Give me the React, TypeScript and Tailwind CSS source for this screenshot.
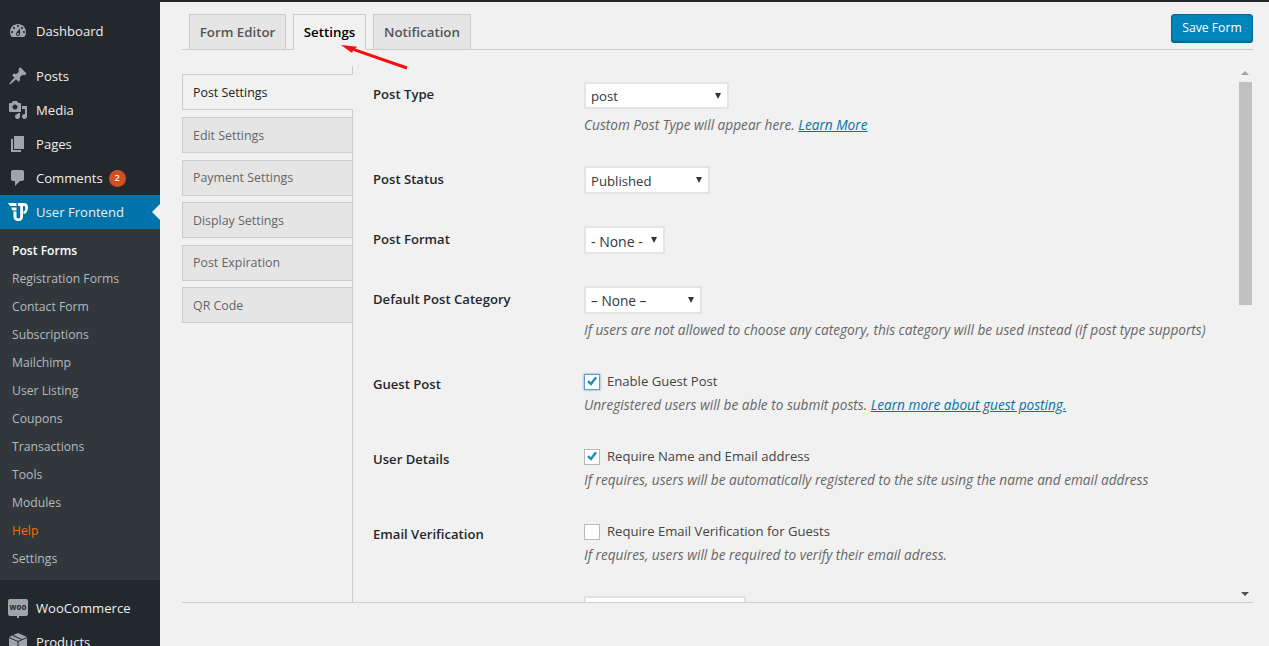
import type { ReactNode } from "react";

const icons = {
  dashboard:
    "M3.76 16h12.48c1.1-1.37 1.76-3.11 1.76-5 0-4.42-3.58-8-8-8s-8 3.58-8 8c0 1.89.66 3.63 1.76 5zM10 4c.55 0 1 .45 1 1s-.45 1-1 1-1-.45-1-1 .45-1 1-1zM6 6c.55 0 1 .45 1 1s-.45 1-1 1-1-.45-1-1 .45-1 1-1zm8 0c.55 0 1 .45 1 1s-.45 1-1 1-1-.45-1-1 .45-1 1-1zm-5.37 5.55L12 7v6c0 1.1-.9 2-2 2s-2-.9-2-2c0-.57.24-1.08.63-1.45zM4 10c.55 0 1 .45 1 1s-.45 1-1 1-1-.45-1-1 .45-1 1-1zm12 0c.55 0 1 .45 1 1s-.45 1-1 1-1-.45-1-1 .45-1 1-1zm-5 3c0-.55-.45-1-1-1s-1 .45-1 1 .45 1 1 1 1-.45 1-1z",
  post: "M10.44 3.02l1.82-1.82 6.36 6.35-1.83 1.82c-1.05-.68-2.48-.57-3.41.36l-.75.75c-.92.93-1.04 2.35-.35 3.41l-1.83 1.82-2.41-2.41-2.8 2.79c-.42.42-3.38 2.71-3.8 2.29s1.86-3.39 2.28-3.81l2.79-2.79L4.1 9.36l1.83-1.82c1.05.69 2.48.57 3.4-.36l.75-.75c.93-.92 1.05-2.35.36-3.41z",
  media:
    "M13 11V4c0-.55-.45-1-1-1h-1.67L9 1H5L3.67 3H2c-.55 0-1 .45-1 1v7c0 .55.45 1 1 1h10c.55 0 1-.45 1-1zM7 4.5c1.38 0 2.5 1.12 2.5 2.5S8.38 9.5 7 9.5 4.5 8.38 4.5 7 5.62 4.5 7 4.5zM14 6h5v10.5c0 1.38-1.12 2.5-2.5 2.5S14 17.88 14 16.5s1.12-2.5 2.5-2.5c.17 0 .34.02.5.05V9h-3V6zm-4 8.05V13h2v3.5c0 1.38-1.12 2.5-2.5 2.5S7 17.88 7 16.5 8.12 14 9.5 14c.17 0 .34.02.5.05z",
  page: "M6 15V2h10v13H6zm-1 1h8v2H3V5h2v11z",
  comment:
    "M5 2h9c1.1 0 2 .9 2 2v7c0 1.1-.9 2-2 2h-2l-5 5v-5H5c-1.1 0-2-.9-2-2V4c0-1.1.9-2 2-2z",
  frontend:
    "M0 1h8.500v3H2zM3 5.500h5.500v3H4.500zM5.500 9.500h3v5c0 1.300.7 2 2 2s1.700-.7 1.700-2V4h2.800v10.500c0 3-1.800 4.500-4.500 4.500s-5-1.500-5-4.500zM10 1h6c2.600 0 4 1.900 4 4.200S18.600 12 16 12h-.5V9h.5c.8 0 1.200-.8 1.200-1.800V5.500c0-1-.4-1.500-1.200-1.500h-6z",
};

function MenuIcon({ path, dim = true }: { path: string; dim?: boolean }) {
  return (
    <svg viewBox="0 0 20 20" className={`h-5 w-5 ${dim ? "text-[#a0a5aa]" : "text-white"}`} fill="currentColor">
      <path d={path} />
    </svg>
  );
}

function WooIcon() {
  return (
    <div className="relative -mt-[2px] flex h-[17px] w-5 items-center justify-center rounded-[2px] bg-[#a0a5aa]">
      <span className="text-[8px] leading-none font-bold text-[#23282d]">woo</span>
      <span className="absolute -bottom-[2px] left-[9px] h-[3px] w-[2px] bg-[#a0a5aa]" />
    </div>
  );
}

function ProductsIcon() {
  return (
    <svg viewBox="0 0 20 20" className="h-5 w-5">
      <path d="M10 1l9 4v10l-9 4-9-4V5z" fill="#a0a5aa" />
      <path d="M1 5.500l9 4 9-4M10 9.500V19M5 3.500l9 4" stroke="#23282d" strokeWidth="1" fill="none" />
    </svg>
  );
}

function MenuItem({ icon, label, badge }: { icon: ReactNode; label: string; badge?: string }) {
  return (
    <div className="flex h-[34px] items-center text-[13.100px] text-[#eeeeee]">
      <div className="flex w-9 justify-center">{icon}</div>
      <span className="mt-[2px]">{label}</span>
      {badge && (
        <span className="ml-[6px] flex h-[17px] w-[17px] items-center justify-center rounded-full bg-[#d54e21] text-[9px] font-semibold text-white">
          {badge}
        </span>
      )}
    </div>
  );
}

const subItems = [
  "Post Forms",
  "Registration Forms",
  "Contact Form",
  "Subscriptions",
  "Mailchimp",
  "User Listing",
  "Coupons",
  "Transactions",
  "Tools",
  "Modules",
  "Help",
  "Settings",
];

function Sidebar() {
  return (
    <div className="h-full w-[160px] shrink-0 bg-[#23282d] pt-3">
      <MenuItem icon={<MenuIcon path={icons.dashboard} />} label="Dashboard" />
      <div className="mt-[11px]">
        <MenuItem icon={<MenuIcon path={icons.post} />} label="Posts" />
        <MenuItem icon={<MenuIcon path={icons.media} />} label="Media" />
        <MenuItem icon={<MenuIcon path={icons.page} />} label="Pages" />
        <MenuItem icon={<MenuIcon path={icons.comment} />} label="Comments" badge="2" />
      </div>
      <div className="relative bg-[#0073aa]">
        <MenuItem icon={<MenuIcon path={icons.frontend} dim={false} />} label="User Frontend" />
        <span className="absolute top-[9px] right-0 h-0 w-0 border-y-[8px] border-r-[8px] border-y-transparent border-r-[#f1f1f1]" />
      </div>
      <div className="bg-[#32373c] pt-[7px] pb-[8px]">
        {subItems.map((item) => (
          <div
            key={item}
            className={`flex h-7 items-center pt-[2px] pl-3 ${
              item === "Post Forms"
                ? "text-[12.100px] font-semibold text-white"
                : item === "Help"
                  ? "text-[12.200px] text-[#f56e00]"
                  : "text-[12.200px] text-[#b4b9be]"
            }`}
          >
            {item}
          </div>
        ))}
      </div>
      <div className="mt-[11px]">
        <MenuItem icon={<WooIcon />} label="WooCommerce" />
        <MenuItem icon={<ProductsIcon />} label="Products" />
      </div>
    </div>
  );
}

function TopTab({ label, active, className }: { label: string; active?: boolean; className: string }) {
  return (
    <div
      className={`-mb-px flex h-[36px] items-center justify-center border border-[#cccccc] pt-[2px] text-[13.300px] font-semibold ${className} ${
        active ? "border-b-[#f1f1f1] bg-[#f1f1f1] text-black" : "bg-[#e5e5e5] text-[#555555]"
      }`}
    >
      {label}
    </div>
  );
}

const sideTabs = ["Edit Settings", "Payment Settings", "Display Settings", "Post Expiration", "QR Code"];

function SideTabs() {
  return (
    <div className="relative z-10 w-[170px] shrink-0 pt-2">
      <div className="flex h-9 w-[171px] items-center border-y border-l border-[#cccccc] bg-[#f1f1f1] pt-[3px] pl-[10px] text-[12.400px] text-[#222222]">
        Post Settings
      </div>
      <div className="mt-[7px] flex flex-col gap-[6.500px]">
        {sideTabs.map((tab) => (
          <div
            key={tab}
            className="flex h-9 items-center border border-r-0 border-[#cccccc] bg-[#e5e5e5] pt-[2px] pl-[10px] text-[12.400px] text-[#666666]"
          >
            {tab}
          </div>
        ))}
      </div>
    </div>
  );
}

function FakeSelect({ value, className, textClass }: { value: string; className: string; textClass: string }) {
  return (
    <div
      className={`flex items-center justify-between border-2 border-[#e4e4e4] bg-white pr-[6px] pl-[5px] text-[#32373c] ${className}`}
    >
      <span className={textClass}>{value}</span>
      <span className="h-0 w-0 border-x-[3px] border-t-[6px] border-x-transparent border-t-[#333333]" />
    </div>
  );
}

function Check({ checked, focus }: { checked?: boolean; focus?: boolean }) {
  return (
    <div
      className={`flex h-4 w-4 items-center justify-center border bg-white ${
        focus ? "border-[#5b9dd9] shadow-[0_0_2px_rgba(30,140,190,0.8)]" : "border-[#b4b9be]"
      }`}
    >
      {checked && (
        <svg viewBox="0 0 16 16" className="h-[15px] w-[15px]">
          <path d="M2.500 8.500l2-2 2.200 2.300 4.800-6.500 2.200 1.600-6.700 9z" fill="#1e8cbe" />
        </svg>
      )}
    </div>
  );
}

function Row({
  label,
  children,
  className,
  labelClass = "pt-[2px]",
}: {
  label: string;
  children: ReactNode;
  className: string;
  labelClass?: string;
}) {
  return (
    <div className={`flex ${className}`}>
      <div className={`w-[211px] shrink-0 text-[13.100px] leading-[20px] font-semibold text-[#23282d] ${labelClass}`}>
        {label}
      </div>
      <div className="min-w-0 flex-1">{children}</div>
    </div>
  );
}

function Desc({ children }: { children: ReactNode }) {
  return <p className="mt-[4px] text-[13.650px] leading-5 whitespace-nowrap text-[#666666] italic">{children}</p>;
}

function CheckLine({ label, checked, focus }: { label: string; checked?: boolean; focus?: boolean }) {
  return (
    <div className="flex h-[19px] items-center gap-[7px] text-[13.100px] text-[#444444]">
      <Check checked={checked} focus={focus} />
      <span>{label}</span>
    </div>
  );
}

function SettingsForm() {
  return (
    <div className="min-w-0 flex-1 overflow-hidden border-l border-[#cccccc] pt-4 pl-5">
      <Row label="Post Type" className="h-[84px]">
        <FakeSelect value="post" className="mb-[6px] h-[27px] w-[145px]" textClass="mt-[2px] text-[13.200px]" />
        <Desc>
          Custom Post Type will appear here. <span className="text-[#0073aa] underline">Learn More</span>
        </Desc>
      </Row>
      <Row label="Post Status" className="h-[60px]" labelClass="pt-[3px]">
        <FakeSelect value="Published" className="h-7 w-[126px]" textClass="mt-[4px] text-[13.200px]" />
      </Row>
      <Row label="Post Format" className="h-[60px]" labelClass="pt-[3px]">
        <FakeSelect value="- None -" className="h-7 w-[81px]" textClass="mt-[2px] text-[14px]" />
      </Row>
      <Row label="Default Post Category" className="h-[86px]" labelClass="pt-[3px]">
        <FakeSelect value="– None –" className="mb-[6px] h-7 w-[118px]" textClass="mt-[2px] text-[13.700px]" />
        <Desc>If users are not allowed to choose any category, this category will be used instead (if post type supports)</Desc>
      </Row>
      <Row label="Guest Post" className="h-[75px]">
        <CheckLine label="Enable Guest Post" checked focus />
        <Desc>
          Unregistered users will be able to submit posts.{" "}
          <span className="text-[#0073aa] underline">Learn more about guest posting.</span>
        </Desc>
      </Row>
      <Row label="User Details" className="h-[75px]">
        <CheckLine label="Require Name and Email address" checked />
        <Desc>If requires, users will be automatically registered to the site using the name and email address</Desc>
      </Row>
      <Row label="Email Verification" className="h-[74px]">
        <CheckLine label="Require Email Verification for Guests" />
        <Desc>If requires, users will be required to verify their email adress.</Desc>
      </Row>
      <div className="ml-[211px] h-7 w-[162px] border-2 border-[#e2e2e2] bg-white" />
    </div>
  );
}

function Scrollbar() {
  return (
    <div className="flex w-[17px] shrink-0 flex-col items-center pt-[5px] pb-[6px] pl-[1px]">
      <span className="h-0 w-0 border-x-[4px] border-b-[4px] border-x-transparent border-b-[#a3a3a3]" />
      <div className="mt-[7px] h-[223px] w-[13px] bg-[#c1c1c1]" />
      <span className="mt-auto h-0 w-0 border-x-[4px] border-t-[4px] border-x-transparent border-t-[#505050]" />
    </div>
  );
}

function Arrow() {
  return (
    <svg viewBox="0 0 80 34" className="absolute top-[38px] left-[176px] z-20 h-[34px] w-[80px]">
      <path d="M71 28L18 9.700" stroke="#f60d0d" strokeWidth="3" fill="none" />
      <path d="M5 5L21 6.700L15.700 12.700z" fill="#f60d0d" />
    </svg>
  );
}

export default function App() {
  return (
    <div className="flex h-[646px] w-[1269px] flex-col overflow-hidden bg-[#f1f1f1] font-['Open_Sans',sans-serif]">
      <div className="h-[2px] shrink-0 bg-[#23282d]" />
      <div className="flex min-h-0 flex-1">
        <Sidebar />
        <div className="relative min-w-0 flex-1 pt-3 pr-4 pl-[22px]">
          <div className="flex h-[36px] items-start border-b border-[#cccccc] pl-[7px]">
            <TopTab label="Form Editor" className="w-[97px]" />
            <TopTab label="Settings" active className="ml-[7px] w-[73px]" />
            <TopTab label="Notification" className="ml-[7px] w-[98px]" />
            <button className="ml-auto flex h-7 w-[82px] items-center justify-center rounded-[3px] border border-[#006799] bg-[#0085ba] pt-px text-[12.200px] text-white shadow-[0_1px_0_#006799]">
              Save Form
            </button>
          </div>
          <div className="mt-4 flex h-[537px] border-b border-[#cccccc]">
            <SideTabs />
            <SettingsForm />
            <Scrollbar />
          </div>
          <Arrow />
        </div>
      </div>
    </div>
  );
}
